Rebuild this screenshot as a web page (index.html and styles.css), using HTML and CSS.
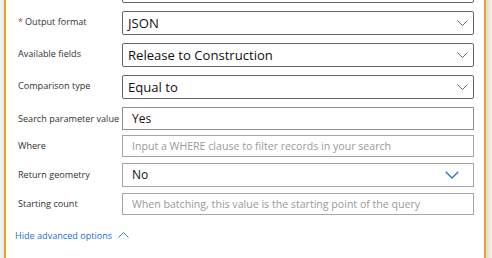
FILE: index.html
```html
<!DOCTYPE html>
<html>
<head>
<meta charset="utf-8">
<link rel="stylesheet" href="styles.css">
</head>
<body>
<div class="frame">
  <div class="gutter-left"></div>
  <div class="panel">
    <div class="content">
      <div class="row row-cut">
        <div class="label"></div>
        <div class="field dd h24"></div>
      </div>
      <div class="row gap8">
        <div class="label label-dd"><span class="req">*</span>Output format</div>
        <div class="field dd h24"><span class="val">JSON</span><svg class="chev" width="11" height="6" viewBox="0 0 11 6"><path d="M0.5 0.5 L5.5 5.5 L10.5 0.5" fill="none" stroke="#6b6b6b" stroke-width="1"/></svg></div>
      </div>
      <div class="row gap8">
        <div class="label label-dd">Available fields</div>
        <div class="field dd h24"><span class="val">Release to Construction</span><svg class="chev" width="11" height="6" viewBox="0 0 11 6"><path d="M0.5 0.5 L5.5 5.5 L10.5 0.5" fill="none" stroke="#6b6b6b" stroke-width="1"/></svg></div>
      </div>
      <div class="row gap8">
        <div class="label label-dd">Comparison type</div>
        <div class="field dd h24"><span class="val">Equal to</span><svg class="chev" width="11" height="6" viewBox="0 0 11 6"><path d="M0.5 0.5 L5.5 5.5 L10.5 0.5" fill="none" stroke="#6b6b6b" stroke-width="1"/></svg></div>
      </div>
      <div class="row gap8">
        <div class="label">Search parameter value</div>
        <div class="field tf h23"><span class="val">Yes</span></div>
      </div>
      <div class="row gap5">
        <div class="label">Where</div>
        <div class="field tf light h22"><span class="ph">Input a WHERE clause to filter records in your search</span></div>
      </div>
      <div class="row gap6">
        <div class="label">Return geometry</div>
        <div class="field tf light h24"><span class="val">No</span><svg class="chev-blue" width="14" height="8" viewBox="0 0 14 8"><path d="M0.7 0.7 L7 7 L13.3 0.7" fill="none" stroke="#2a6fe0" stroke-width="1.3"/></svg></div>
      </div>
      <div class="row gap6">
        <div class="label">Starting count</div>
        <div class="field tf light h22"><span class="ph">When batching, this value is the starting point of the query</span></div>
      </div>
      <div class="toggle">
        <span class="toggle-text">Hide advanced options</span>
        <svg class="chev-up" width="11" height="6" viewBox="0 0 11 6"><path d="M0.5 5.5 L5.5 0.5 L10.5 5.5" fill="none" stroke="#3a7ee0" stroke-width="1"/></svg>
      </div>
    </div>
  </div>
  <div class="gutter-right"></div>
</div>
</body>
</html>
```
FILE: styles.css
```css
html, body {
  margin: 0;
  padding: 0;
  width: 492px;
  height: 258px;
  overflow: hidden;
  background: #f0f0f0;
  font-family: "Open Sans", "Noto Sans", sans-serif;
}
.frame {
  display: flex;
  height: 258px;
}
.gutter-left {
  width: 4px;
  background: linear-gradient(to right, #f4f4f4, #e6e6e6);
}
.gutter-right {
  width: 6px;
  background: linear-gradient(to right, #dcdcdc, #f2f2f2);
}
.panel {
  flex: 1;
  background: #ffffff;
  border-left: 2px solid #f0a21c;
  border-right: 2px solid #f0a21c;
  overflow: hidden;
}
.content {
  padding: 0 10px 0 12px;
}
.row {
  display: grid;
  grid-template-columns: 104px 1fr;
  align-items: center;
}
.row-cut { margin-top: -21px; }
.gap8 { margin-top: 8px; }
.gap6 { margin-top: 6px; }
.gap5 { margin-top: 5px; }
.label {
  font-size: 9.1px;
  color: #323130;
  line-height: 14px;
  white-space: nowrap;
}
.label-dd { margin-bottom: 3px; }
.req {
  color: #d13438;
  margin-right: 2px;
}
.field {
  box-sizing: border-box;
  display: flex;
  align-items: center;
  background: #fff;
  line-height: 16px;
}
.h24 { height: 24px; }
.h23 { height: 23px; }
.h22 { height: 22px; }
.dd {
  border: 1px solid #666666;
  border-radius: 2px;
  padding: 0 5px 0 5px;
}
.tf {
  border: 1px solid #8f8f8f;
  padding: 0 6px 0 9px;
}
.tf.light { border-color: #a6a6a6; }
.val {
  flex: 1;
  font-size: 13.1px;
  color: #111;
  white-space: nowrap;
}
.tf .val { font-size: 12px; }
.ph {
  flex: 1;
  font-size: 10.6px;
  color: #9a9a9a;
  white-space: nowrap;
  overflow: hidden;
}
.chev-blue {
  margin-right: 8px;
}
.toggle {
  display: flex;
  align-items: center;
  margin-top: 13px;
  margin-left: -3px;
  gap: 6px;
}
.toggle-text {
  font-size: 9.1px;
  line-height: 16px;
  color: #1a6fd8;
}
.chev-up {
  margin-top: -2px;
}
```
